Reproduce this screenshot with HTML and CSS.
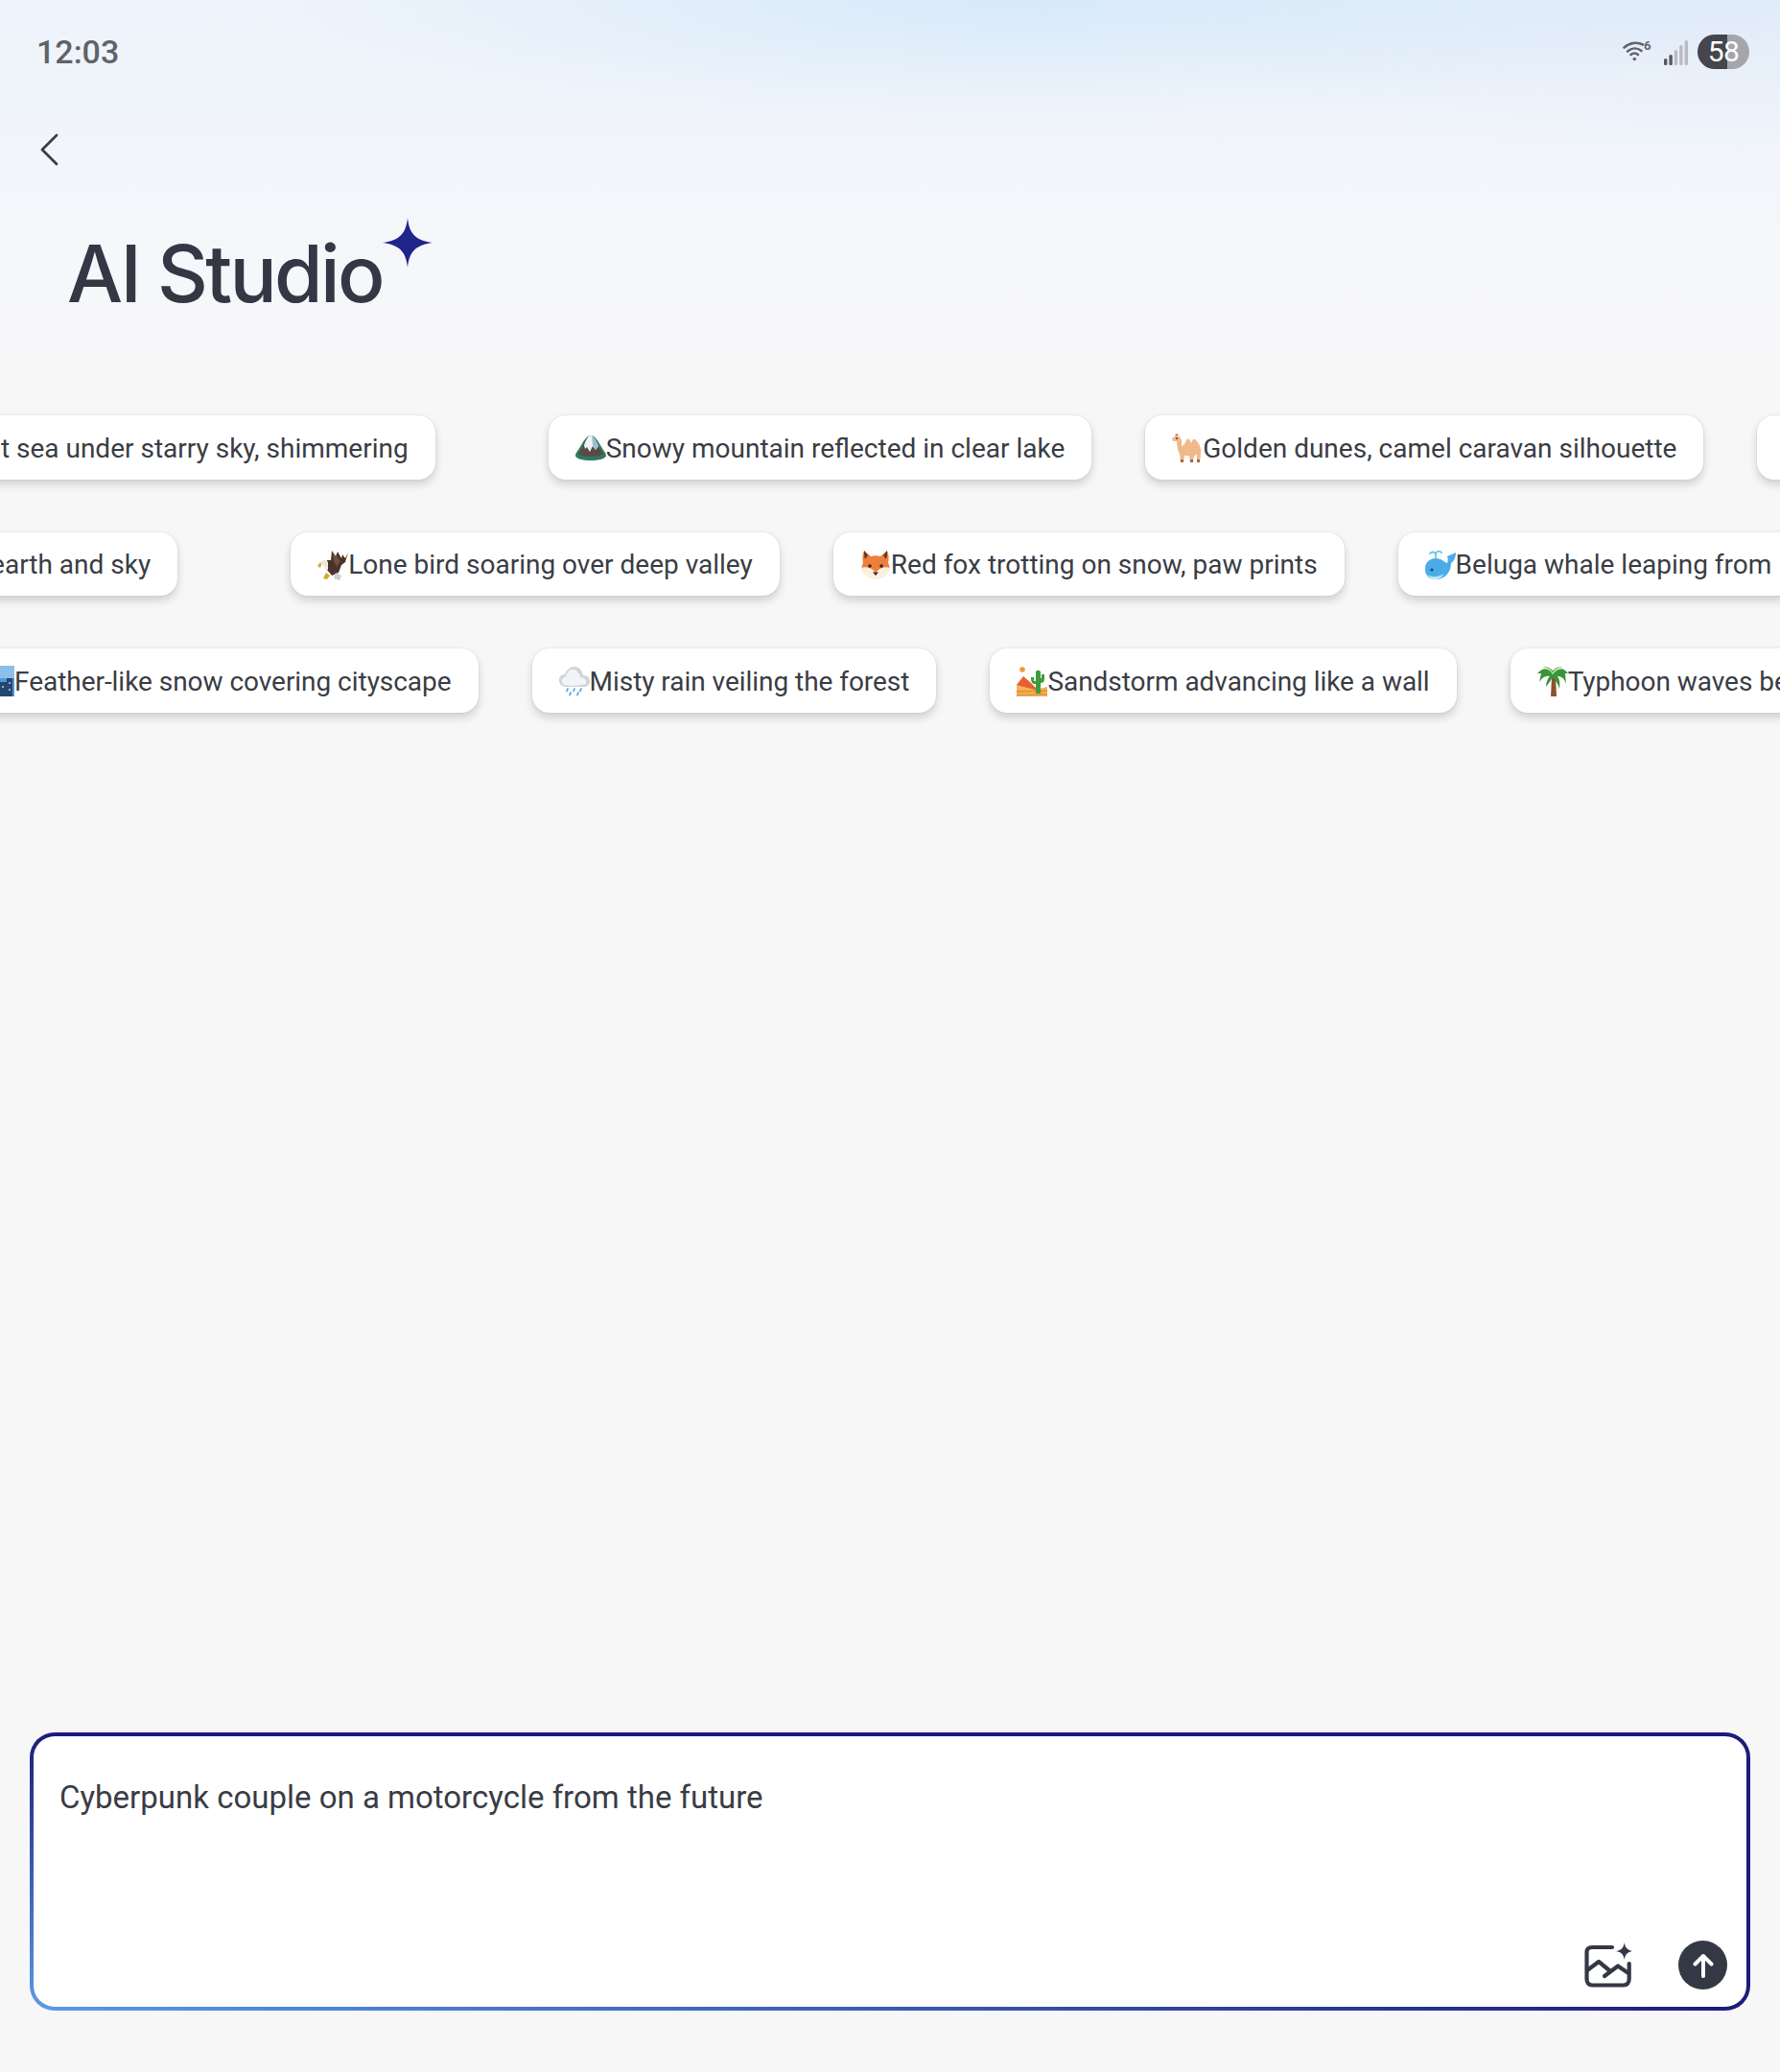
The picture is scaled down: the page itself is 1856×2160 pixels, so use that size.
FILE: index.html
```html
<!DOCTYPE html>
<html lang="en">
<head>
    <meta charset="UTF-8">
    <meta name="viewport" content="width=device-width, initial-scale=1.0">
    <title>AI Studio</title>
    <link rel="stylesheet" href="styles.css">
</head>
<body>
    <div class="page">

        <!-- Status bar -->
        <div class="status-bar">
            <span class="clock">12:03</span>
            <div class="status-icons">
                <svg class="wifi-icon" width="32" height="22" viewBox="0 0 32 22" fill="none" stroke="#62656c" stroke-width="2.6" stroke-linecap="round">
                    <path d="M1.5 7.5C7 2.5 15 1.5 21 4.5"/>
                    <path d="M5 11.5C9.5 7.5 15 7.5 19.5 11"/>
                    <path d="M8.5 15C10.5 13 14 13 16 15"/>
                    <circle cx="12.3" cy="19.5" r="1.8" fill="#62656c" stroke="none"/>
                    <text x="22" y="10" class="wifi-six" stroke="none" fill="#62656c">6</text>
                </svg>
                <svg class="signal-icon" width="25" height="26" viewBox="0 0 25 26">
                    <rect x="0" y="19" width="3.4" height="7" rx="1.5" fill="#55585f"/>
                    <rect x="5.4" y="15" width="3.4" height="11" rx="1.5" fill="#55585f"/>
                    <rect x="10.8" y="10" width="3.4" height="16" rx="1.5" fill="#b9bcc3"/>
                    <rect x="16.2" y="5" width="3.4" height="21" rx="1.5" fill="#b9bcc3"/>
                    <rect x="21.6" y="0" width="3.4" height="26" rx="1.5" fill="#b9bcc3"/>
                </svg>
                <div class="battery">58</div>
            </div>
        </div>

        <!-- Back button -->
        <div class="back-row">
            <svg width="20" height="34" viewBox="0 0 20 34" fill="none" stroke="#3a3d45" stroke-width="2.8" stroke-linecap="round" stroke-linejoin="round">
                <path d="M18 2L3 17L18 32"/>
            </svg>
        </div>

        <div class="title-row">
            <h1>AI Studio</h1>
            <svg class="title-star" width="52" height="52" viewBox="0 0 52 52">
                <defs>
                    <linearGradient id="star-fill" x1="0" y1="0" x2="1" y2="1">
                        <stop offset="0" stop-color="#1c2a8c"/>
                        <stop offset="1" stop-color="#22208a"/>
                    </linearGradient>
                </defs>
                <path fill="url(#star-fill)" d="M26 0C27.5 15 33 23.5 52 26C33 28.5 27.5 37 26 52C24.5 37 19 28.5 0 26C19 23.5 24.5 15 26 0Z"/>
            </svg>
        </div>

        <!-- Prompt suggestions -->
        <div class="prompt-rows">
            <div class="prompt-row row-one">
                <div class="chip">Vast sea under starry sky, shimmering</div>
                <div class="chip loop-start">
                    <svg class="emoji" viewBox="0 0 32 32">
                        <path fill="#2d7a5c" d="M16 3C20 3 23 8 26 13C28 17 32 21 32 24C32 27 24 29 16 29C8 29 0 27 0 24C0 21 4 17 6 13C9 8 12 3 16 3Z"/>
                        <path fill="#5b4a44" d="M3 22C6 18 8 14 10 11L22 11C24 14 26 18 29 22C24 26 8 26 3 22Z"/>
                        <path fill="#eef3f7" d="M9 13C11 8 13 3 16 3C19 3 21 8 24 14L21 18L18 14L15 20L12 15L10 17Z"/>
                        <path fill="#9dbdd4" d="M17 4C20 5 22 9 24 14L21 18L18 13Z"/>
                    </svg>
                    Snowy mountain reflected in clear lake
                </div>
                <div class="chip">
                    <svg class="emoji" viewBox="0 0 32 32">
                        <path fill="#efb98c" d="M0 6L4 3L8 4L10 8L10 14C12 14 13 12 15 8C16 6 18 6 19 9C20 11 20 11 21 9C22 6 24 6 26 9C29 13 31 17 30 23L29 31H26L26 23L23 24L22 31H19L18 24H13L12 31H9L8 22C6 19 5 14 5 9L1 9Z"/>
                        <path fill="#a4683f" d="M3 3L5 1L7 3ZM9 28h3v3H9zM19 28h3v3h-3zM26 28h3v3h-3z"/>
                        <circle cx="5" cy="6" r="0.9" fill="#3c2a1e"/>
                    </svg>
                    Golden dunes, camel caravan silhouette
                </div>
                <div class="chip chip-next"></div>
            </div>

            <div class="prompt-row row-two">
                <div class="chip">Thin line between earth and sky</div>
                <div class="chip loop-start">
                    <svg class="emoji" viewBox="0 0 32 32">
                        <path fill="#4a3428" d="M32 3L29 9L26 5L25 9L21 2L19 7L15 1L14 11L10 11L10 21L15 27L22 24L25 16L29 13Z"/>
                        <path fill="#6e5040" d="M16 4L21 8L24 12L20 18L17 12Z"/>
                        <path fill="#eee7dc" d="M3 13C5 10 9 10 11 13L11 21L8 20L6 16L3 17Z"/>
                        <path fill="#d9a52e" d="M3 13L0 17L3 19L4 16Z"/>
                        <path fill="#cfcfcf" d="M19 24L25 27L23 32L17 30Z"/>
                        <path fill="#d9a52e" d="M9 24L13 27L10 31L6 30Z"/>
                    </svg>
                    Lone bird soaring over deep valley
                </div>
                <div class="chip">
                    <svg class="emoji" viewBox="0 0 32 32">
                        <path fill="#ee7f3a" d="M4 1L11 7C14 6 18 6 21 7L28 1C30 5 30 10 29 14C31 17 31 21 29 23L16 30L3 23C1 21 1 17 3 14C2 10 2 5 4 1Z"/>
                        <path fill="#5f3a26" d="M4 1L8 6L5 10C4 7 4 4 4 1ZM28 1L24 6L27 10C28 7 28 4 28 1Z"/>
                        <path fill="#fbf0df" d="M1 19C7 17 12 19 16 24C20 19 25 17 31 19C30 26 23 31 16 31C9 31 2 26 1 19Z"/>
                        <circle cx="10" cy="17" r="1.8" fill="#35231b"/>
                        <circle cx="22" cy="17" r="1.8" fill="#35231b"/>
                        <path fill="#35231b" d="M13 23.5H19L16 27Z"/>
                    </svg>
                    Red fox trotting on snow, paw prints
                </div>
                <div class="chip">
                    <svg class="emoji" viewBox="0 0 32 32">
                        <path fill="#49ace8" d="M0 20C0 13 5 9 11 9C17 9 20 13 23 14C24 12 24 9 23 7L32 3C32 8 30 12 27 14C27 23 21 31 11 31C4 31 0 27 0 20Z"/>
                        <path fill="#c6e9fb" d="M2 26C6 29 14 29 20 25C17 29 14 31 11 31C7 31 4 29 2 26Z"/>
                        <circle cx="7" cy="21" r="1.5" fill="#17405f"/>
                        <path fill="none" stroke="#6cc0ee" stroke-width="1.8" stroke-linecap="round" d="M11 8V4M11 4C9 2 7 2 5 4M11 4C13 1 15 1 17 3"/>
                    </svg>
                    Beluga whale leaping from
                </div>
            </div>

            <div class="prompt-row row-three">
                <div class="chip">
                    <svg class="emoji" viewBox="0 0 32 32">
                        <rect x="0" y="0" width="32" height="32" fill="#4d97dc"/>
                        <rect x="0" y="0" width="32" height="13" fill="#8cc0ea"/>
                        <path fill="#27456f" d="M2 32V15H10V10H17V17H24V13H30V32Z"/>
                        <path fill="#7fb4e2" d="M12 14h2v2h-2zM12 20h2v2h-2zM19 21h2v2h-2zM26 17h2v2h-2zM26 24h2v2h-2zM5 20h2v2H5zM5 26h2v2H5z"/>
                    </svg>
                    Feather-like snow covering cityscape
                </div>
                <div class="chip">
                    <svg class="emoji" viewBox="0 0 32 32">
                        <path fill="#cdd6de" d="M7 22C3 22 0 19 0 15C0 11 3 9 6 9C8 4 11 1 16 1C21 1 24 5 25 10C29 10 32 12 32 16C32 20 29 22 26 22Z"/>
                        <path fill="#f2f5f7" d="M5 20C2 18 2 13 6 12C8 11 8 5 13 4C18 3 21 8 22 12C26 12 29 15 28 19C20 21 11 21 5 20Z"/>
                        <path fill="none" stroke="#5aa8e0" stroke-width="1.8" stroke-linecap="round" d="M9 24L8 26.5M16 24L15 26.5M23 24L22 26.5M12 28L11 30.5M20 28L19 30.5"/>
                    </svg>
                    Misty rain veiling the forest
                </div>
                <div class="chip">
                    <svg class="emoji" viewBox="0 0 32 32">
                        <circle cx="6" cy="4" r="2.8" fill="#f09a3e"/>
                        <path fill="#e85f32" d="M0 20L7 11L14 17L20 23V26H0Z"/>
                        <path fill="#f3b357" d="M0 20L19 25L32 22V32H0Z"/>
                        <path fill="#e8913f" d="M0 26L32 25V27L0 28ZM0 30L32 29V30.5L0 31.5Z"/>
                        <path fill="#3f9c3d" d="M20 29V19H19C16 19 15 17 15 12H18V16H20V7C20 4 25 4 25 7V13H26V9H29V14C29 17 27 18 25 18V29Z"/>
                    </svg>
                    Sandstorm advancing like a wall
                </div>
                <div class="chip">
                    <svg class="emoji" viewBox="0 0 32 32">
                        <path fill="#8a5130" d="M15 12H19L20 32H14Z"/>
                        <path fill="#3b9438" d="M16 9C12 2 6 1 0 8L4 8L2 17C5 12 9 10 13 11C11 13 9 17 9 22C12 18 15 14 16 12C18 15 21 17 23 24C24 18 23 14 21 11C25 11 28 13 30 19L29 8H32C27 1 21 2 16 9Z"/>
                        <path fill="#62b84a" d="M16 8C13 3 9 1 4 2C9 0 13 2 16 5C19 2 23 0 28 2C23 1 19 3 16 8Z"/>
                    </svg>
                    Typhoon waves beating shore
                </div>
            </div>
        </div>

        <!-- Prompt input -->
        <div class="prompt-box">
            <div class="prompt-text">Cyberpunk couple on a motorcycle from the future</div>
            <div class="prompt-actions">
                <svg class="image-icon" width="50" height="48" viewBox="0 0 50 48" fill="none" stroke="#333844" stroke-width="4.2" stroke-linecap="round" stroke-linejoin="round">
                    <path d="M29 5H8C4.5 5 2.5 7 2.5 10V38C2.5 42 4.5 44.5 8 44.5H41C44.5 44.5 46.7 42 46.7 38V22"/>
                    <path d="M3 29L15 20L26 29"/>
                    <path d="M21 35L35 24.5L46 32"/>
                    <path fill="#333844" stroke="none" d="M41.7 0C42.5 5.5 45 8 50.5 9C45 10 42.5 12.5 41.7 18C41 12.5 38.5 10 33 9C38.5 8 41 5.5 41.7 0Z"/>
                </svg>
                <button class="send-button">
                    <svg width="22" height="26" viewBox="0 0 22 26" fill="none" stroke="#fff" stroke-width="4" stroke-linecap="round" stroke-linejoin="round">
                        <path d="M11 24V3M2.5 11.5L11 3L19.5 11.5"/>
                    </svg>
                </button>
            </div>
        </div>

    </div>
</body>
</html>
```

FILE: styles.css
```css
html, body {
    margin: 0;
    height: 100%;
    font-family: Roboto, "Liberation Sans", sans-serif;
    color: #3a3d45;
}

.page {
    height: 2160px;
    overflow: hidden;
    display: flex;
    flex-direction: column;
    background-color: #f7f7f8;
    background-image:
        radial-gradient(ellipse 800px 130px at 58% 0, rgba(200, 226, 248, 0.6), rgba(200, 226, 248, 0)),
        radial-gradient(ellipse 700px 160px at 100% 0, rgba(205, 222, 244, 0.4), rgba(205, 222, 244, 0)),
        linear-gradient(to bottom, #eef4fb 0, #f1f5fb 140px, #f6f7fa 280px, #f7f7f8 400px);
}

/* Status bar */
.status-bar {
    height: 108px;
    padding: 0 32px 0 38px;
    display: flex;
    justify-content: space-between;
    align-items: center;
}

.clock {
    font-size: 34px;
    font-weight: 500;
    color: #5f6369;
}

.status-icons {
    display: flex;
    align-items: center;
}

.wifi-icon {
    margin-right: 11px;
    margin-bottom: 2px;
}

.wifi-six {
    font-family: Roboto, sans-serif;
    font-size: 13px;
    font-weight: 700;
}

.signal-icon {
    margin-right: 10px;
    margin-top: 2px;
}

.battery {
    width: 54px;
    height: 36px;
    border-radius: 18px;
    background: linear-gradient(to right, #45464b 31px, #a5a6ab 31px);
    color: #fff;
    font-size: 30px;
    line-height: 36px;
    text-align: center;
    letter-spacing: -0.5px;
}

/* Header */
.back-row {
    height: 68px;
    padding-left: 41px;
    display: flex;
    align-items: center;
    margin-top: 14px;
}

.title-row {
    margin-top: 39px;
    padding-left: 70px;
    height: 90px;
    display: flex;
    align-items: flex-start;
}

h1 {
    margin: 12px 0 0;
    font-family: Inter, Roboto, sans-serif;
    font-size: 82px;
    font-weight: 500;
    line-height: 90px;
    letter-spacing: -2.75px;
    color: #333844;
}

.title-star {
    margin: -2px 0 0;
    flex-shrink: 0;
}

/* Prompt chips */
.prompt-rows {
    margin-top: 114px;
    display: flex;
    flex-direction: column;
    gap: 55px;
}

.prompt-row {
    display: flex;
    gap: 56px;
    white-space: nowrap;
}

.row-one { margin-left: -74px; }
.row-two { margin-left: -263px; }
.row-three {
    margin-left: -45px;
    letter-spacing: -0.04px;
}

.chip {
    flex-shrink: 0;
    height: 66.5px;
    box-sizing: border-box;
    padding: 2px 28px 0;
    display: flex;
    align-items: center;
    background-color: #fff;
    border-radius: 18px;
    box-shadow: 0 0 2px rgba(0, 0, 0, 0.12), 0 5px 10px rgba(0, 0, 0, 0.16);
    font-size: 28px;
}

.loop-start {
    margin-left: 62px;
}

.chip-next {
    width: 200px;
}

.emoji {
    width: 32px;
    height: 32px;
    flex-shrink: 0;
}

/* Prompt input */
.prompt-box {
    margin: auto 31px 64px 31px;
    height: 290px;
    box-sizing: border-box;
    border: 4px solid transparent;
    border-radius: 26px;
    padding: 44px 20px 0 27px;
    background-image:
        linear-gradient(#fff, #fff),
        linear-gradient(to top right, #5b9ae6 0%, #1c1d7a 50%);
    background-origin: border-box;
    background-clip: padding-box, border-box;
    display: flex;
    flex-direction: column;
    justify-content: space-between;
}

.prompt-text {
    font-size: 33px;
    line-height: 40px;
    color: #3a3d45;
}

.prompt-actions {
    display: flex;
    justify-content: flex-end;
    align-items: center;
    gap: 48px;
    margin-bottom: 18px;
}

.send-button {
    width: 51px;
    height: 51px;
    padding: 0;
    border: none;
    border-radius: 50%;
    background-color: #333844;
    display: flex;
    align-items: center;
    justify-content: center;
}
```
